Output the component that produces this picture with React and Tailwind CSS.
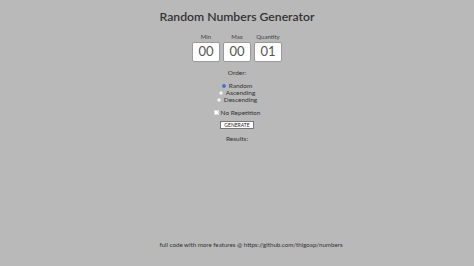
import React from 'react';

const font = { fontFamily: '"Lato", "Open Sans", sans-serif' };

function NumberBox({ label, value }) {
    return (
        <div className="flex flex-col items-center">
            <span className="text-[6px] leading-[8px] text-[#444]">{label}</span>
            <div className="w-[28px] h-[20px] mt-[1px] bg-white border border-[#9a9a9a] rounded-[2px] flex items-center justify-center text-[13px] text-[#555]">
                {value}
            </div>
        </div>
    );
}

function Radio({ label, checked }) {
    return (
        <div className="flex items-center justify-center gap-[3px] leading-[7px] h-[7px]">
            <span className={`w-[4px] h-[4px] rounded-full border ${checked ? 'bg-[#3b7bd6] border-[#3b7bd6]' : 'bg-white border-[#ddd]'}`}></span>
            <span className="text-[6.5px] text-[#333]">{label}</span>
        </div>
    );
}

export default function App() {
    return (
        <div className="w-full h-[266px] bg-[#b9b9b9] flex flex-col items-center" style={font}>
            {/* Title */}
            <h1 className="mt-[9px] text-[12.2px] leading-[16px] font-semibold text-[#333]">Random Numbers Generator</h1>

            {/* Inputs */}
            <div className="flex gap-[3px] mt-[8px]">
                <NumberBox label="Min" value="00" />
                <NumberBox label="Max" value="00" />
                <NumberBox label="Quantity" value="01" />
            </div>

            {/* Order */}
            <div className="mt-[7px] text-[6.5px] leading-[8px] text-[#333]">Order:</div>
            <div className="mt-[5px] flex flex-col">
                <Radio label="Random" checked />
                <Radio label="Ascending" />
                <Radio label="Descending" />
            </div>

            <div className="mt-[6px] flex items-center gap-[2px] h-[7px]">
                <span className="w-[5px] h-[5px] bg-white border border-[#ddd]"></span>
                <span className="text-[6.5px] text-[#333]">No Repetition</span>
            </div>

            <button className="mt-[5px] px-[3px] h-[8px] bg-white border border-[#777] text-[5px] leading-[6px] text-[#222]">GENERATE</button>

            <div className="mt-[6px] text-[6.5px] leading-[8px] text-[#333]">Results:</div>

            <div className="flex-1"></div>
            <div className="mb-[17px] pl-[28px] text-[6.2px] leading-[8px] text-[#333]">full code with more features @ https://github.com/thigoap/numbers</div>
        </div>
    );
}
